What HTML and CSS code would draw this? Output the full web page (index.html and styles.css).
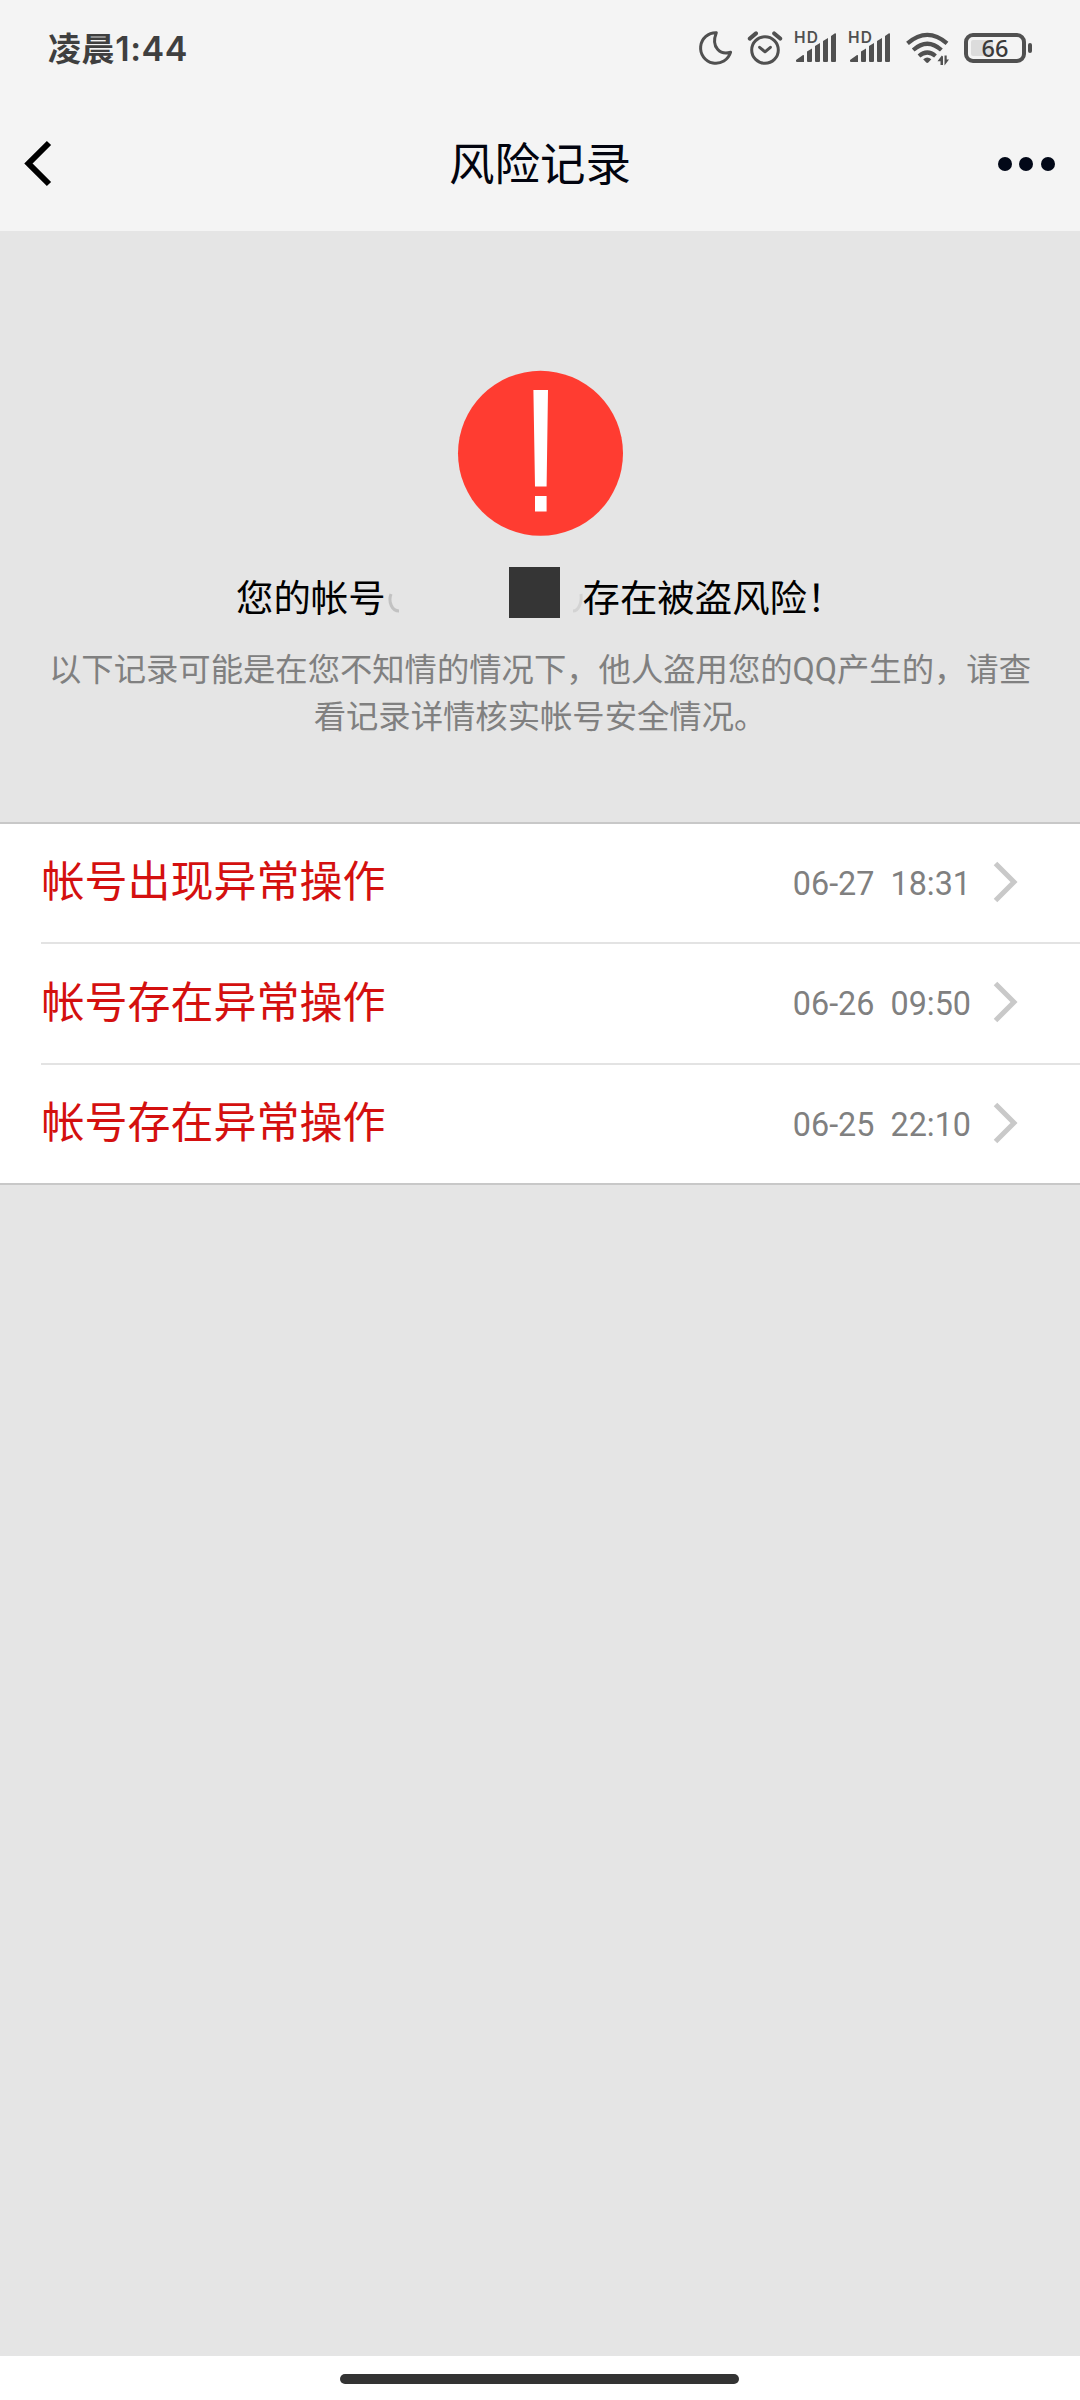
FILE: index.html
```html
<!DOCTYPE html>
<html lang="zh-CN">
<head>
<meta charset="utf-8">
<title>风险记录</title>
<link rel="stylesheet" href="styles.css">
</head>
<body>
<div class="screen">
  <div class="status-bar">
    <div class="clock">凌晨<span class="clock-digits">1:44</span></div>
    <svg class="status-icons" width="340" height="44" viewBox="696 26 340 44">
      <path class="line" d="M716.3 32.7A15.3 15.3 0 1 0 730.6 52.2C720.8 55.5 710.500 47.500 716.300 32.700Z"/>
      <circle class="line" cx="765" cy="50" r="13.3"/>
      <path class="line alarm-bell" d="M749.8 38.6L756 33.400M774.200 33.400L780.200 38.600"/>
      <path class="line" d="M759.600 47.300L765 51.800L770.400 47.300"/>
      <g id="sim">
        <text class="hd" x="794" y="43" textLength="24">HD</text>
        <path class="solid" d="M796 60L803 55Q804 54.500 804 56V62H797Q796 62 796 61ZM807 51.500L812 48.500V61Q812 62 811 62H808Q807 62 807 61ZM815 46L820 43V61Q820 62 819 62H816Q815 62 815 61ZM823 41L828 38V61Q828 62 827 62H824Q823 62 823 61ZM831 36L835 33.300Q836 33 836 34.500V61Q836 62 835 62H832Q831 62 831 61Z"/>
      </g>
      <use href="#sim" x="54"/>
      <path class="line wifi" d="M907.500 43.300Q927.300 26.400 947 43.300M913.200 50Q927.300 37.600 941.400 50M919 56Q927.300 49 935.500 56"/>
      <path class="solid" d="M923.200 59.200Q927.300 55.800 931.300 59.200L928.300 62.500Q927.300 63.400 926.200 62.500Z"/>
      <path class="solid" d="M940.500 56.500V65H943V56.500L941.800 55.500L937.500 61.300H940.500ZM944.500 55.500V65.500L949 59.500H946.700V55.500Z"/>
      <rect x="966" y="35" width="58" height="26" rx="7" class="line battery"/>
      <rect x="971" y="40" width="22" height="16" rx="2" fill="#dcdcdc"/>
      <text class="charge" x="981.500" y="56.700">66</text>
      <rect x="1028" y="43" width="4" height="10" rx="2" class="solid"/>
    </svg>
  </div>

  <header class="nav">
    <svg class="back" width="30" height="50" viewBox="0 0 30 50"><path d="M27 4L6.500 24.500L27 45"/></svg>
    <h1 class="title">风险记录</h1>
    <div class="more"><i></i><i></i><i></i></div>
  </header>

  <section class="notice">
    <svg class="alert" width="166" height="166" viewBox="0 0 166 166">
      <circle cx="83.500" cy="83.300" r="82.500" fill="#ff3c31"/>
      <path fill="#fff" d="M76.400 20H91L89.600 116.500H78ZM78 126H89.600V141.500H78Z"/>
    </svg>
    <p class="headline">
      <span>您的帐号</span>
      <span class="masked"><svg class="trace trace-start" width="16" height="24" viewBox="0 0 16 24"><path d="M3 4C0 12 4 21 11 21"/></svg><b class="mask"></b><svg class="trace trace-end" width="12" height="22" viewBox="0 0 12 22"><path d="M9 2C10 12 6 19 1 19"/></svg></span>
      <span class="tail">存在被盗风险！</span>
    </p>
    <p class="detail">以下记录可能是在您不知情的情况下，他人盗用您的QQ产生的，请查<br>看记录详情核实帐号安全情况。</p>
  </section>

  <ul class="records">
    <li class="record"><span class="name">帐号出现异常操作</span><time class="time">06-27&nbsp; 18:31</time><svg class="chevron" width="28" height="44" viewBox="0 0 28 44"><path d="M3.500 3.500L22 22L3.500 40.500"/></svg></li>
    <li class="record"><span class="name">帐号存在异常操作</span><time class="time">06-26&nbsp; 09:50</time><svg class="chevron" width="28" height="44" viewBox="0 0 28 44"><path d="M3.500 3.500L22 22L3.500 40.500"/></svg></li>
    <li class="record"><span class="name">帐号存在异常操作</span><time class="time">06-25&nbsp; 22:10</time><svg class="chevron" width="28" height="44" viewBox="0 0 28 44"><path d="M3.500 3.500L22 22L3.500 40.500"/></svg></li>
  </ul>

  <footer class="gesture-bar"><div class="pill"></div></footer>
</div>
</body>
</html>
```
FILE: styles.css
```css
* {
  box-sizing: border-box;
  margin: 0;
  padding: 0;
}

body {
  background: #e5e5e5;
  font-family: Roboto, "Noto Sans CJK SC", sans-serif;
}

.screen {
  display: flex;
  flex-direction: column;
  width: 1080px;
  height: 2400px;
  overflow: hidden;
}

/* Status bar */
.status-bar {
  display: flex;
  justify-content: space-between;
  align-items: center;
  height: 96px;
  padding: 0 44px 0 48px;
  background: #f4f4f4;
}

.clock {
  color: #3f3f3f;
  font: 700 33px/48px "Noto Sans CJK SC", sans-serif;
  letter-spacing: .6px;
}

.clock-digits {
  font-family: Inter, sans-serif;
  font-size: 34px;
  font-weight: 600;
}

.line {
  fill: none;
  stroke: #505050;
  stroke-width: 3;
  stroke-linecap: round;
  stroke-linejoin: round;
}

.alarm-bell { stroke-width: 4; }
.wifi { stroke-width: 4.200px; stroke-linecap: butt; }
.battery { stroke-width: 4; }
.solid { fill: #505050; }
.hd { fill: #505050; font: 600 15.500px Inter, sans-serif; }
.charge { fill: #3a3a3a; font: 500 23.500px "Noto Sans", sans-serif; }

/* Navigation */
.nav {
  display: grid;
  grid-template-columns: 120px 1fr 120px;
  align-items: center;
  height: 135px;
  background: #f4f4f4;
}

.back {
  margin-left: 22px;
  fill: none;
  stroke: #000;
  stroke-width: 6;
}

.title {
  padding-top: 5px;
  color: #02040f;
  text-align: center;
  font-size: 45.500px;
  font-weight: 400;
  line-height: 60px;
}

.more {
  display: flex;
  gap: 7.500px;
  margin-left: 37.500px;
}

.more i {
  width: 14px;
  height: 14px;
  border-radius: 50%;
  background: #020818;
}

/* Notice */
.notice {
  display: flex;
  flex-direction: column;
  align-items: center;
  height: 591px;
  padding-top: 139px;
}

.headline {
  display: flex;
  align-items: center;
  width: 608px;
  height: 56px;
  margin-top: 35px;
  color: #000;
  font-size: 37.400px;
  line-height: 56px;
  white-space: nowrap;
}

.masked {
  display: flex;
  align-items: center;
  width: 197px;
}

.mask {
  flex: none;
  width: 51px;
  height: 51px;
  margin: -14px 12px 0 105px;
  background: #353535;
}

.trace {
  flex: none;
  fill: none;
  stroke: #b4b4b4;
  stroke-width: 3;
  opacity: .7;
}

.trace-start { margin: 6px 0 0 2px; }
.trace-end { margin-top: 8px; opacity: .35; }

.detail {
  margin-top: 20px;
  color: #808080;
  text-align: center;
  font-size: 32.350px;
  line-height: 47px;
  white-space: nowrap;
}

/* Records */
.records {
  height: 363px;
  border-top: 2px solid #c8c8c8;
  border-bottom: 2px solid #c8c8c8;
  background: #fff;
  list-style: none;
}

.record {
  display: flex;
  align-items: center;
  height: 118px;
  margin-left: 41px;
  padding-bottom: 3px;
}

.record + .record {
  height: 121px;
  border-top: 2px solid #e3e3e3;
}

.record:last-child { height: 120px; }

.name {
  flex: 1;
  padding: 1px 0 0 .5px;
  color: #d4100f;
  font-size: 43px;
  line-height: 60px;
}

.time {
  padding-top: 4px;
  color: #808080;
  font-size: 32.350px;
  line-height: 48px;
}

.chevron {
  margin: 0 60px 0 21px;
  fill: none;
  stroke: #c9c9c9;
  stroke-width: 5;
}

/* Gesture bar */
.gesture-bar {
  display: flex;
  justify-content: center;
  height: 44px;
  margin-top: auto;
  padding: 18px 1px 0 0;
  background: #fff;
}

.pill {
  width: 399px;
  height: 10px;
  border-radius: 5px;
  background: #333;
}
```
